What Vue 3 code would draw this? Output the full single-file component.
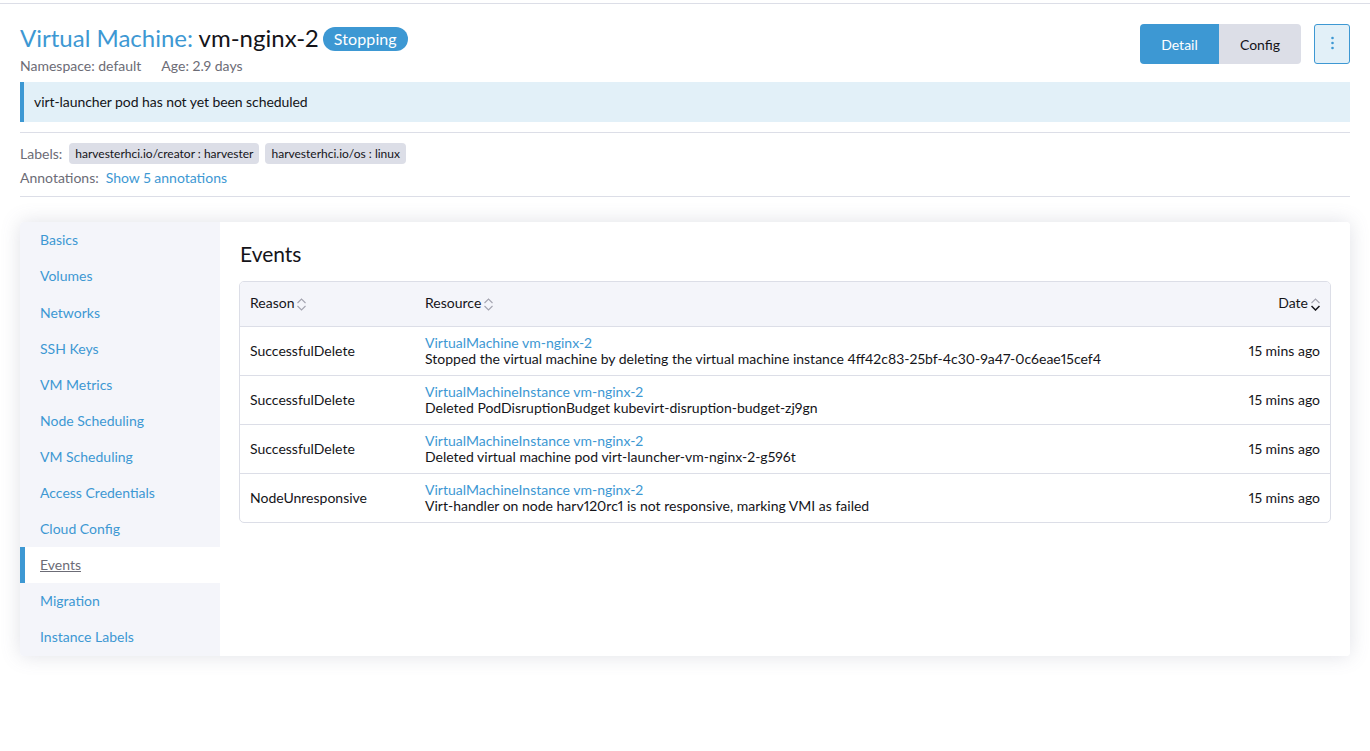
<script setup>
const tabs = ['Basics', 'Volumes', 'Networks', 'SSH Keys', 'VM Metrics', 'Node Scheduling', 'VM Scheduling', 'Access Credentials', 'Cloud Config', 'Events', 'Migration', 'Instance Labels']

const events = [
  { reason: 'SuccessfulDelete', resource: 'VirtualMachine vm-nginx-2', message: 'Stopped the virtual machine by deleting the virtual machine instance 4ff42c83-25bf-4c30-9a47-0c6eae15cef4' },
  { reason: 'SuccessfulDelete', resource: 'VirtualMachineInstance vm-nginx-2', message: 'Deleted PodDisruptionBudget kubevirt-disruption-budget-zj9gn' },
  { reason: 'SuccessfulDelete', resource: 'VirtualMachineInstance vm-nginx-2', message: 'Deleted virtual machine pod virt-launcher-vm-nginx-2-g596t' },
  { reason: 'NodeUnresponsive', resource: 'VirtualMachineInstance vm-nginx-2', message: 'Virt-handler on node harv120rc1 is not responsive, marking VMI as failed' }
]
</script>

<template>
  <div class="page">
    <header class="head">
      <div>
        <h1 class="title">
          <a class="link">Virtual Machine:</a> vm-nginx-2
          <span class="badge">Stopping</span>
        </h1>
        <div class="meta">
          <span>Namespace: default</span>
          <span>Age: 2.9 days</span>
        </div>
      </div>
      <div class="actions">
        <div class="toggle">
          <button class="seg active">Detail</button>
          <button class="seg">Config</button>
        </div>
        <button class="more">
          <svg width="3" height="14" viewBox="0 0 3 14"><circle cx="1.5" cy="2" r="1.3" /><circle cx="1.5" cy="7" r="1.3" /><circle cx="1.5" cy="12" r="1.3" /></svg>
        </button>
      </div>
    </header>

    <div class="banner">virt-launcher pod has not yet been scheduled</div>

    <section class="labels">
      <div class="label-row">
        <span class="muted">Labels:</span>
        <span class="tag">harvesterhci.io/creator : harvester</span>
        <span class="tag">harvesterhci.io/os : linux</span>
      </div>
      <div class="annot-row">
        <span class="muted">Annotations:</span>
        <a class="link">Show 5 annotations</a>
      </div>
    </section>

    <main class="card">
      <nav class="side">
        <a v-for="t in tabs" :key="t" class="tab" :class="{ current: t === 'Events' }">{{ t }}</a>
      </nav>
      <div class="body">
        <h2 class="body-title">Events</h2>
        <div class="table">
          <div class="row th">
            <div class="c1">Reason<svg class="sort" width="9" height="13" viewBox="0 0 9 13"><path d="M.5 5L4.5 1l4 4M.5 8l4 4 4-4" /></svg></div>
            <div class="c2">Resource<svg class="sort" width="9" height="13" viewBox="0 0 9 13"><path d="M.5 5L4.5 1l4 4M.5 8l4 4 4-4" /></svg></div>
            <div class="c3">Date<svg class="sort" width="9" height="13" viewBox="0 0 9 13"><path d="M.5 5L4.5 1l4 4" /><path class="on" d="M.5 8l4 4 4-4" /></svg></div>
          </div>
          <div v-for="(e, i) in events" :key="i" class="row td">
            <div class="c1">{{ e.reason }}</div>
            <div class="c2">
              <a class="link">{{ e.resource }}</a>
              <div>{{ e.message }}</div>
            </div>
            <div class="c3">15 mins ago</div>
          </div>
        </div>
      </div>
    </main>
  </div>
</template>

<style>
html, body {
  margin: 0;
  background: #fff;
}
</style>

<style scoped>
.page {
  height: 751px;
  box-sizing: border-box;
  padding: 20px 20px 0;
  border-top: 1px solid #dcdee7;
  margin-top: 3px;
  font-family: Lato, sans-serif;
  font-size: 14px;
  font-variant-numeric: proportional-nums;
  color: #141419;
  overflow: hidden;
}

.link {
  color: #3d98d3;
}

.muted {
  color: #6c6c76;
}

.head {
  display: flex;
  justify-content: space-between;
  height: 58px;
}

.title {
  margin: 0;
  font-size: 24px;
  font-weight: 400;
  line-height: 28px;
}

.badge {
  display: inline-block;
  margin-left: -2px;
  padding: 0 11px;
  height: 24px;
  line-height: 24px;
  border-radius: 12px;
  background: #3d98d3;
  color: #fff;
  font-size: 16px;
  letter-spacing: 0.1px;
  vertical-align: 2px;
}

.meta {
  display: flex;
  gap: 20px;
  margin-top: 4px;
  line-height: 20px;
  color: #6c6c76;
}

.actions {
  display: flex;
  align-items: flex-start;
  gap: 13px;
}

.toggle {
  display: flex;
  border-radius: 4px;
  overflow: hidden;
}

.seg {
  height: 40px;
  border: 0;
  padding: 0;
  width: 82px;
  background: #dcdee7;
  color: #141419;
  font: inherit;
}

.seg.active {
  width: 79px;
  background: #3d98d3;
  color: #fff;
}

.more {
  width: 36px;
  height: 40px;
  padding: 0;
  box-sizing: border-box;
  background: #e2f0f8;
  border: 1px solid #3d98d3;
  border-radius: 3px;
  fill: #3d98d3;
}

.banner {
  height: 40px;
  line-height: 40px;
  box-sizing: border-box;
  padding-left: 10px;
  border-left: 4px solid #3d98d3;
  background: #e2f0f8;
  letter-spacing: -0.07px;
}

.labels {
  margin-top: 10px;
  padding: 10px 0 8px;
  border-top: 1px solid #dcdee7;
  border-bottom: 1px solid #dcdee7;
}

.label-row {
  display: flex;
  align-items: center;
  gap: 6px;
  height: 21px;
}

.label-row .muted {
  margin-right: 1px;
}

.tag {
  padding: 0 6px;
  height: 21px;
  line-height: 21px;
  border-radius: 4px;
  background: #dcdee7;
  font-size: 12px;
}

.annot-row {
  display: flex;
  gap: 7px;
  margin-top: 4px;
  line-height: 20px;
}

.card {
  display: flex;
  height: 434px;
  margin-top: 25px;
  border-radius: 4px;
  box-shadow: 0 0 20px rgba(100, 105, 135, 0.2);
}

.side {
  width: 200px;
  flex: none;
  padding-top: 0.35px;
  box-sizing: border-box;
  background: #f4f5fa;
  border-radius: 4px 0 0 4px;
  overflow: hidden;
}

.tab {
  display: block;
  height: 36.1px;
  line-height: 36px;
  padding-left: 20px;
  color: #3d98d3;
}

.tab.current {
  padding-left: 15px;
  border-left: 5px solid #3d98d3;
  background: #fff;
  color: #6c6c76;
  text-decoration: underline;
}

.body {
  flex: 1;
  padding: 18px 20px 20px;
  background: #fff;
  border-radius: 0 4px 4px 0;
}

.body-title {
  margin: 0 0 14px;
  font-size: 21px;
  font-weight: 400;
  line-height: 27px;
}

.table {
  margin: 0 -1px;
  border: 1px solid #dcdee7;
  border-radius: 5px;
  overflow: hidden;
}

.row {
  display: flex;
  align-items: center;
  padding: 0 10px;
}

.th {
  height: 44px;
  padding-bottom: 3px;
  box-sizing: border-box;
  background: #f4f5fa;
}

.td {
  height: 48px;
  border-top: 1px solid #dcdee7;
  line-height: 16px;
}

.c1 {
  width: 175px;
  flex: none;
}

.c2 {
  flex: 1;
}

.c3 {
  width: 160px;
  flex: none;
  text-align: right;
}

.sort {
  margin-left: 3px;
  vertical-align: -3px;
  fill: none;
  stroke: #a4a4b0;
  stroke-width: 1.1;
}

.sort .on {
  stroke: #141419;
  stroke-width: 1.5;
}
</style>
